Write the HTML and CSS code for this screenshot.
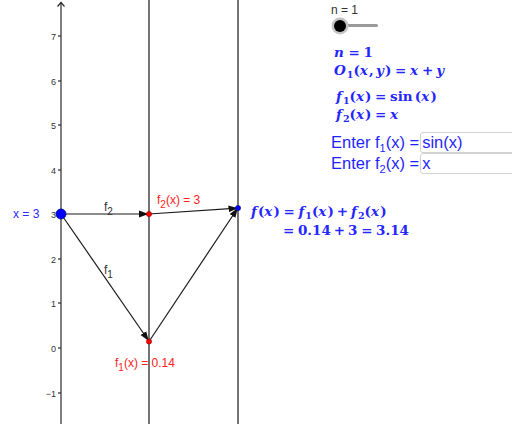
FILE: index.html
```html
<!DOCTYPE html>
<html>
<head>
<meta charset="utf-8">
<link rel="stylesheet" href="styles.css">
</head>
<body>
<div class="applet">
  <svg class="graph" width="512" height="424" viewBox="0 0 512 424">
    <defs>
      <marker id="ah" markerWidth="10" markerHeight="8" refX="9" refY="4" orient="auto" markerUnits="userSpaceOnUse">
        <path d="M0,0.6 L9.5,4 L0,7.4 Z" fill="#111"/>
      </marker>
    </defs>
    <g class="axis">
      <line x1="61" y1="2" x2="61" y2="424"/>
      <polyline points="57.5,6.5 61,2.5 64.5,6.5" fill="none"/>
      <line x1="58" y1="36" x2="61" y2="36"/>
      <line x1="58" y1="81" x2="61" y2="81"/>
      <line x1="58" y1="125" x2="61" y2="125"/>
      <line x1="58" y1="170" x2="61" y2="170"/>
      <line x1="58" y1="214" x2="61" y2="214"/>
      <line x1="58" y1="259" x2="61" y2="259"/>
      <line x1="58" y1="303" x2="61" y2="303"/>
      <line x1="58" y1="348" x2="61" y2="348"/>
      <line x1="58" y1="393" x2="61" y2="393"/>
    </g>
    <g class="ticklbl">
      <text x="56" y="39.5">7</text>
      <text x="56" y="84.5">6</text>
      <text x="56" y="128.5">5</text>
      <text x="56" y="173.5">4</text>
      <text x="56" y="217.5">3</text>
      <text x="56" y="262.5">2</text>
      <text x="56" y="306.5">1</text>
      <text x="56" y="351.5">0</text>
      <text x="56" y="396.5">−1</text>
    </g>
    <g class="vlines">
      <line x1="149" y1="0" x2="149" y2="424"/>
      <line x1="238" y1="0" x2="238" y2="424"/>
    </g>
    <g class="vec">
      <line x1="61" y1="214" x2="148" y2="214" marker-end="url(#ah)"/>
      <line x1="61" y1="214" x2="148.5" y2="340.5" marker-end="url(#ah)"/>
      <line x1="149" y1="214" x2="237.5" y2="208.2" marker-end="url(#ah)"/>
      <line x1="149" y1="341.5" x2="237.5" y2="208.5" marker-end="url(#ah)"/>
    </g>
    <circle cx="61" cy="214" r="5" fill="#0000ff" stroke="#00008a" stroke-width="0.8"/>
    <circle cx="149" cy="214" r="2.6" fill="#ff0000" stroke="#800" stroke-width="0.6"/>
    <circle cx="149" cy="341.5" r="2.6" fill="#ff0000" stroke="#800" stroke-width="0.6"/>
    <circle cx="238" cy="208" r="2.6" fill="#0000ff" stroke="#00008a" stroke-width="0.6"/>
    <text class="lbl blue" x="13" y="218">x = 3</text>
    <text class="lbl dark" x="104" y="211">f<tspan class="sub" dy="4">2</tspan></text>
    <text class="lbl dark" x="104" y="274">f<tspan class="sub" dy="4">1</tspan></text>
    <text class="lbl red" x="157" y="204">f<tspan class="sub" dy="4">2</tspan><tspan dy="-4">(x) = 3</tspan></text>
    <text class="lbl red" x="115" y="367">f<tspan class="sub" dy="4">1</tspan><tspan dy="-4">(x) = 0.14</tspan></text>
  </svg>

  <div class="slider">
    <div class="slider-cap">n = 1</div>
    <div class="slider-track"><span class="knob"></span></div>
  </div>

  <div class="math defs">
    <div class="mline"><i>n</i><span class="rel">=</span>1</div>
    <div class="mline"><i>O</i><sub>1</sub>(<i>x</i>,<span class="comma"></span><i>y</i>)<span class="rel">=</span><i>x</i><span class="bin">+</span><i>y</i></div>
    <div class="mline gap"><i>f</i><sub>1</sub>(<i>x</i>)<span class="rel">=</span>sin<span class="thin"></span>(<i>x</i>)</div>
    <div class="mline ind2"><i>f</i><sub>2</sub>(<i>x</i>)<span class="rel">=</span><i>x</i></div>
  </div>

  <div class="inputs">
    <div class="irow"><span class="ilabel">Enter f<sub>1</sub>(x) =</span><span class="ibox">sin(x)</span></div>
    <div class="irow"><span class="ilabel">Enter f<sub>2</sub>(x) =</span><span class="ibox">x</span></div>
  </div>

  <div class="math result">
    <div class="mline"><i>f</i>(<i>x</i>)<span class="rel">=</span><i>f</i><sub>1</sub>(<i>x</i>)<span class="bin">+</span><i>f</i><sub>2</sub>(<i>x</i>)</div>
    <div class="mline indent"><span class="rel first">=</span>0.14<span class="bin">+</span>3<span class="rel">=</span>3.14</div>
  </div>
</div>
</body>
</html>
```

FILE: styles.css
```css
html, body {
  margin: 0;
  padding: 0;
  background: #ffffff;
}

.applet {
  position: relative;
  width: 512px;
  height: 424px;
  overflow: hidden;
  background: #ffffff;
  font-family: "Liberation Sans", Arial, sans-serif;
}

.graph {
  position: absolute;
  left: 0;
  top: 0;
}

.axis line, .axis polyline {
  stroke: #2a2a2a;
  stroke-width: 1.2;
}

.ticklbl text {
  font-family: "Liberation Sans", Arial, sans-serif;
  font-size: 9px;
  fill: #333333;
  text-anchor: end;
}

.vlines line {
  stroke: #2a2a2a;
  stroke-width: 1.3;
}

.vec line {
  stroke: #1a1a1a;
  stroke-width: 1.2;
}

.lbl {
  font-family: "Liberation Sans", Arial, sans-serif;
  font-size: 12px;
}

.lbl .sub {
  font-size: 10px;
}

.blue { fill: #2a2aff; }
.red { fill: #ff2020; }
.dark { fill: #333333; }

.slider {
  position: absolute;
  left: 331px;
  top: 3px;
}

.slider-cap {
  font-size: 12px;
  color: #333333;
  line-height: 15px;
}

.slider-track {
  position: relative;
  margin-top: 6px;
  margin-left: 9px;
  width: 38px;
  height: 3px;
  background: #9a9a9a;
  border-radius: 2px;
}

.knob {
  position: absolute;
  left: -6px;
  top: -4.5px;
  width: 12px;
  height: 12px;
  border-radius: 50%;
  background: #000000;
  box-shadow: 0 0 0 2.5px #c4c4c4;
}

.math {
  position: absolute;
  font-family: "DejaVu Serif", "Liberation Serif", serif;
  font-weight: bold;
  font-size: 13.5px;
  color: #2626ff;
}

.math i {
  font-style: italic;
  margin-right: 0.08em;
}

.math sub {
  font-size: 9.5px;
  vertical-align: -3px;
  line-height: 0;
}

.rel {
  margin: 0 0.27em;
}

.rel.first {
  margin-left: 0;
}

.bin {
  margin: 0 0.22em;
}

.comma {
  display: inline-block;
  width: 0.17em;
}

.thin {
  display: inline-block;
  width: 0.17em;
}

.mline {
  line-height: 18px;
  white-space: nowrap;
}

.defs {
  left: 334px;
  top: 43px;
}

.defs .gap {
  margin-top: 8px;
}

.defs .gap, .defs .ind2 {
  margin-left: 2px;
}

.inputs {
  position: absolute;
  left: 331px;
  top: 132px;
  display: flex;
  flex-direction: column;
  gap: 1px;
}

.irow {
  display: flex;
  align-items: center;
  height: 20px;
}

.ilabel {
  font-size: 16.5px;
  color: #1f1fff;
  white-space: nowrap;
}

.ilabel sub {
  font-size: 11px;
  vertical-align: -4px;
  line-height: 0;
}

.ibox {
  box-sizing: border-box;
  height: 21px;
  width: 110px;
  margin-left: 1px;
  border: 1px solid #d2d2d2;
  border-radius: 3px;
  padding-left: 1px;
  font-size: 16.5px;
  line-height: 19px;
  color: #1f1fff;
  background: #ffffff;
}

.result {
  left: 251px;
  top: 202px;
}

.result .indent {
  margin-left: 32px;
  margin-top: 1px;
}
```
